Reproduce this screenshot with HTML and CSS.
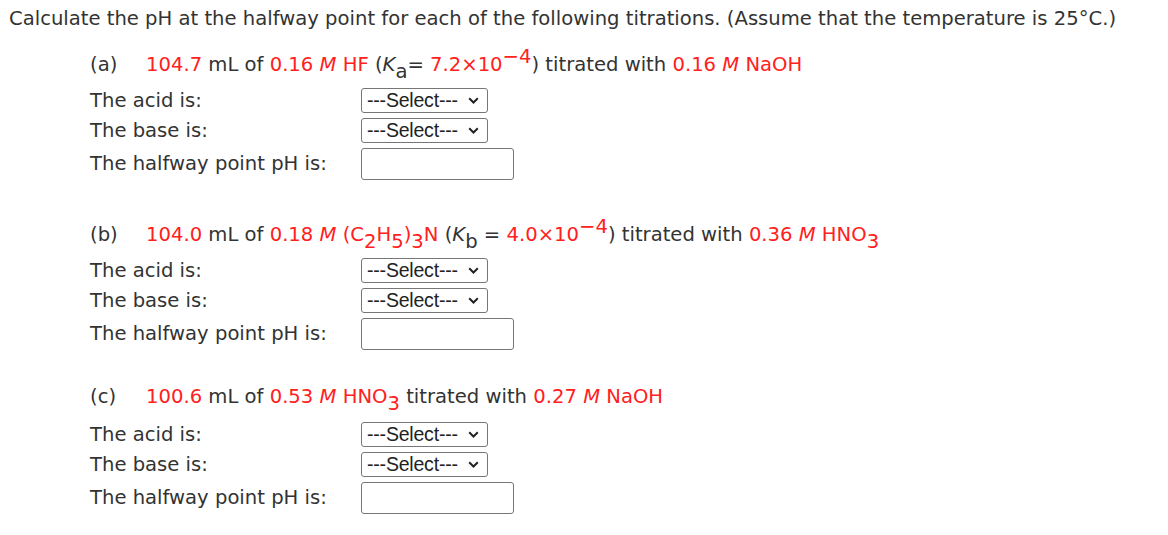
FILE: index.html
```html
<!DOCTYPE html>
<html>
<head>
<meta charset="utf-8">
<link rel="stylesheet" href="styles.css">
</head>
<body>
<p class="intro">Calculate the pH at the halfway point for each of the following titrations. (Assume that the temperature is 25°C.)</p>

<section class="part part-a">
  <div class="head"><span class="tag">(a)</span><span class="r">104.7</span> mL of <span class="r">0.16 <i>M</i> HF</span> (<i>K</i><sub>a</sub>= <span class="r">7.2×10<sup>−4</sup></span>) titrated with <span class="r">0.16 <i>M</i> NaOH</span></div>
  <div class="rows">
    <div class="label">The acid is:</div>
    <div class="select"><span>---Select---</span><svg width="11" height="7" viewBox="0 0 11 7"><path d="M1.2 1.3 L5.5 5.5 L9.8 1.3" fill="none" stroke="#222" stroke-width="2"/></svg></div>
    <div class="label">The base is:</div>
    <div class="select"><span>---Select---</span><svg width="11" height="7" viewBox="0 0 11 7"><path d="M1.2 1.3 L5.5 5.5 L9.8 1.3" fill="none" stroke="#222" stroke-width="2"/></svg></div>
    <div class="label">The halfway point pH is:</div>
    <div class="input"></div>
  </div>
</section>

<section class="part part-b">
  <div class="head"><span class="tag">(b)</span><span class="r">104.0</span> mL of <span class="r">0.18 <i>M</i> (C<sub>2</sub>H<sub>5</sub>)<sub>3</sub>N</span> (<i>K</i><sub>b</sub> = <span class="r">4.0×10<sup>−4</sup></span>) titrated with <span class="r">0.36 <i>M</i> HNO<sub>3</sub></span></div>
  <div class="rows">
    <div class="label">The acid is:</div>
    <div class="select"><span>---Select---</span><svg width="11" height="7" viewBox="0 0 11 7"><path d="M1.2 1.3 L5.5 5.5 L9.8 1.3" fill="none" stroke="#222" stroke-width="2"/></svg></div>
    <div class="label">The base is:</div>
    <div class="select"><span>---Select---</span><svg width="11" height="7" viewBox="0 0 11 7"><path d="M1.2 1.3 L5.5 5.5 L9.8 1.3" fill="none" stroke="#222" stroke-width="2"/></svg></div>
    <div class="label">The halfway point pH is:</div>
    <div class="input"></div>
  </div>
</section>

<section class="part part-c">
  <div class="head"><span class="tag">(c)</span><span class="r">100.6</span> mL of <span class="r">0.53 <i>M</i> HNO<sub>3</sub></span> titrated with <span class="r">0.27 <i>M</i> NaOH</span></div>
  <div class="rows">
    <div class="label">The acid is:</div>
    <div class="select"><span>---Select---</span><svg width="11" height="7" viewBox="0 0 11 7"><path d="M1.2 1.3 L5.5 5.5 L9.8 1.3" fill="none" stroke="#222" stroke-width="2"/></svg></div>
    <div class="label">The base is:</div>
    <div class="select"><span>---Select---</span><svg width="11" height="7" viewBox="0 0 11 7"><path d="M1.2 1.3 L5.5 5.5 L9.8 1.3" fill="none" stroke="#222" stroke-width="2"/></svg></div>
    <div class="label">The halfway point pH is:</div>
    <div class="input"></div>
  </div>
</section>
</body>
</html>
```

FILE: styles.css
```css
html, body {
  margin: 0;
  padding: 0;
  background: #fff;
}
body {
  font-family: "DejaVu Sans", Verdana, sans-serif;
  font-size: 19.6px;
  color: #333;
  padding: 0 0 0 9px;
}
.intro {
  margin: 0;
  padding-top: 8px;
  line-height: 22px;
}
.part {
  margin-left: 81px;
}
.part-a { margin-top: 23px; }
.part-b { margin-top: 43px; }
.part-c { margin-top: 35px; }
.head {
  line-height: 24px;
  white-space: nowrap;
}
.tag {
  display: inline-block;
  width: 56px;
}
.r { color: #ff2020; }
i { font-style: italic; }
sub, sup {
  font-size: 19.6px;
  line-height: 0;
  position: relative;
  vertical-align: baseline;
}
sub { top: 7px; }
sup { top: -8px; }
.rows {
  margin-top: 11px;
  display: grid;
  grid-template-columns: 271px auto;
  row-gap: 5px;
  align-items: center;
}
.part-c .rows { margin-top: 13px; }
.label {
  line-height: 24px;
}
.select {
  width: 127px;
  height: 25px;
  box-sizing: border-box;
  border: 1px solid #767676;
  border-radius: 3px;
  display: flex;
  align-items: center;
  justify-content: space-between;
  padding: 0 8px 0 5px;
  font-family: "Liberation Sans", Arial, sans-serif;
  font-size: 19.5px;
  letter-spacing: -0.2px;
  color: #222;
}
.input {
  width: 153px;
  height: 32px;
  box-sizing: border-box;
  border: 1px solid #767676;
  border-radius: 3px;
}
```
